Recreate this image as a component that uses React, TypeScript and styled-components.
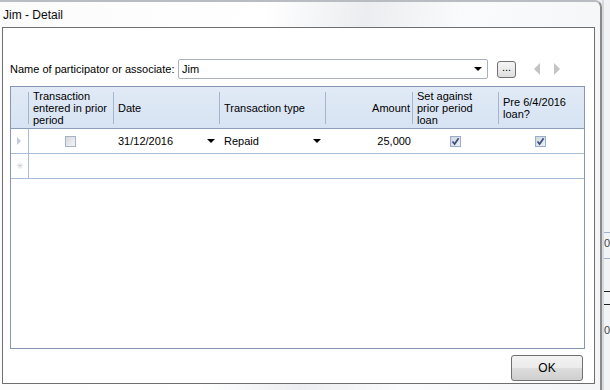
import styled, { createGlobalStyle } from "styled-components";

const GlobalStyle = createGlobalStyle`
  html, body {
    margin: 0;
    padding: 0;
    background: #eef0f3;
  }
  body {
    font-family: "Liberation Sans", Arial, sans-serif;
    font-size: 11px;
    color: #000;
  }
`;

const Desktop = styled.div`
  display: flex;
  width: 610px;
  height: 390px;
  overflow: hidden;
`;

const Window = styled.div`
  width: 602px;
  height: 390px;
  flex: none;
  box-sizing: border-box;
  display: flex;
  flex-direction: column;
  padding: 0 5px 6px 2px;
  background: linear-gradient(100deg, #fbfbfc 0%, #ffffff 40%, #ebedf0 55%, #fafbfc 70%, #f4f5f7 100%);
  border-right: 2px solid #8a8a8a;
  border-top: 2px solid #b9bcc0;
  border-top-right-radius: 7px;
`;

const TitleBar = styled.div`
  height: 25px;
  flex: none;
  display: flex;
  align-items: center;
  padding-left: 1px;
  font-size: 12px;
  color: #0b0b0b;
`;

const Client = styled.div`
  flex: 1;
  display: flex;
  flex-direction: column;
  background: #fff;
  border: 1px solid #6f6f6f;
  padding: 31px 10px 2px 7px;
`;

const NameRow = styled.div`
  display: flex;
  align-items: center;
  height: 20px;
`;

const Label = styled.span`
  width: 168px;
  white-space: nowrap;
`;

const Combo = styled.div`
  width: 310px;
  height: 20px;
  box-sizing: border-box;
  border: 1px solid #a9b3c0;
  border-radius: 2px;
  display: flex;
  align-items: center;
  justify-content: space-between;
  padding: 0 5px 0 3px;
`;

const Arrow = styled.span`
  width: 0;
  height: 0;
  border-left: 4px solid transparent;
  border-right: 4px solid transparent;
  border-top: 4px solid #000;
`;

const EllipsisButton = styled.button`
  margin-left: 9px;
  width: 19px;
  height: 17px;
  padding: 0 0 4px;
  border: 1px solid #707070;
  border-radius: 3px;
  background: linear-gradient(#f6f6f6, #dedede);
  font: 11px "Liberation Sans", Arial, sans-serif;
  line-height: 8px;
`;

const Nav = styled.div`
  display: flex;
  gap: 14px;
  margin-left: 18px;
`;

const NavArrow = styled.span<{ $dir: "left" | "right" }>`
  width: 0;
  height: 0;
  border-top: 6px solid transparent;
  border-bottom: 6px solid transparent;
  ${(p) =>
    p.$dir === "left"
      ? "border-right: 6px solid #c4c4c4;"
      : "border-left: 6px solid #c4c4c4;"}
`;

const Grid = styled.div`
  margin-top: 7px;
  width: 575px;
  height: 263px;
  box-sizing: border-box;
  border: 1px solid #8797b2;
  background: #fff;
  display: flex;
  flex-direction: column;
`;

const Row = styled.div<{ $head?: boolean }>`
  display: grid;
  grid-template-columns: 18px 85px 106px 106px 87px 86px 85px;
  height: ${(p) => (p.$head ? "41px" : "24px")};
  border-bottom: 1px solid ${(p) => (p.$head ? "#8b9dba" : "#a9bcd8")};
  background: ${(p) =>
    p.$head ? "linear-gradient(#e1eaf6, #d7e3f3)" : "#fff"};
`;

const HeadCell = styled.div<{ $right?: boolean; $last?: boolean }>`
  display: flex;
  align-items: center;
  justify-content: ${(p) => (p.$right ? "flex-end" : "flex-start")};
  text-align: ${(p) => (p.$right ? "right" : "left")};
  padding: 0 3px 0 4px;
  line-height: 12px;
  position: relative;
  &::after {
    content: "";
    display: ${(p) => (p.$last ? "none" : "block")};
    position: absolute;
    right: 0;
    top: 5px;
    bottom: 4px;
    width: 1px;
    background: #a3b5cf;
  }
`;

const RowHeader = styled.div`
  border-right: 1px solid #a9bcd8;
  display: flex;
  align-items: center;
  justify-content: center;
  color: #c3ccd8;
  font-size: 9px;
`;

const Pointer = styled.span`
  width: 0;
  height: 0;
  border-top: 4px solid transparent;
  border-bottom: 4px solid transparent;
  border-left: 4px solid #c2ccd9;
  margin-left: -2px;
`;

const Cell = styled.div<{ $align?: "left" | "center" | "right" }>`
  display: flex;
  align-items: center;
  justify-content: ${(p) =>
    p.$align === "center" ? "center" : p.$align === "right" ? "flex-end" : "space-between"};
  padding: ${(p) => (p.$align === "right" ? "0 2px 0 0" : "0 5px 0 4px")};
  color: #000;
`;

const Check = styled.span<{ $checked?: boolean }>`
  width: 11px;
  height: 11px;
  box-sizing: border-box;
  border: 1px solid ${(p) => (p.$checked ? "#9aaccc" : "#a8b3c2")};
  background: ${(p) =>
    p.$checked
      ? "linear-gradient(135deg, #cfd6e0, #eef1f5)"
      : "linear-gradient(135deg, #d6d9de, #f3f4f6)"};
  display: flex;
  align-items: center;
  justify-content: center;
  margin-right: 1px;
`;

const Footer = styled.div`
  display: flex;
  justify-content: flex-end;
  padding: 6px 1px 0 0;
`;

const OkButton = styled.button`
  width: 72px;
  height: 26px;
  border: 1px solid #707070;
  border-radius: 3px;
  background: linear-gradient(#f3f3f3 0%, #ebebeb 50%, #dddddd 51%, #cfcfcf 100%);
  font: 12px "Liberation Sans", Arial, sans-serif;
  color: #000;
`;

const Backdrop = styled.div`
  flex: 1;
  display: flex;
  flex-direction: column;
  background: #f2f3f5;
  border-left: 2px solid #d7dade;
`;

const BackLine = styled.div<{ $gap: number; $dark?: boolean }>`
  margin-top: ${(p) => p.$gap}px;
  height: 1px;
  background: ${(p) => (p.$dark ? "#222" : "#9fb0c8")};
`;

const BackText = styled.div<{ $gap: number }>`
  margin-top: ${(p) => p.$gap}px;
  font-size: 11px;
  color: #444;
  line-height: 11px;
`;

function Tick() {
  return (
    <svg width="9" height="9" viewBox="0 0 9 9">
      <path d="M1.5 4.5 L3.6 7 L7.6 1.2" fill="none" stroke="#3b4f7c" strokeWidth="1.7" />
    </svg>
  );
}

export default function App() {
  return (
    <Desktop>
      <GlobalStyle />
      <Window>
        <TitleBar>Jim - Detail</TitleBar>
        <Client>
          <NameRow>
            <Label>Name of participator or associate:</Label>
            <Combo>
              <span>Jim</span>
              <Arrow />
            </Combo>
            <EllipsisButton>...</EllipsisButton>
            <Nav>
              <NavArrow $dir="left" />
              <NavArrow $dir="right" />
            </Nav>
          </NameRow>
          <Grid>
            <Row $head>
              <HeadCell />
              <HeadCell>Transaction entered in prior period</HeadCell>
              <HeadCell>Date</HeadCell>
              <HeadCell>Transaction type</HeadCell>
              <HeadCell $right>Amount</HeadCell>
              <HeadCell>Set against prior period loan</HeadCell>
              <HeadCell $last>Pre 6/4/2016 loan?</HeadCell>
            </Row>
            <Row>
              <RowHeader>
                <Pointer />
              </RowHeader>
              <Cell $align="center">
                <Check />
              </Cell>
              <Cell>
                <span>31/12/2016</span>
                <Arrow />
              </Cell>
              <Cell>
                <span>Repaid</span>
                <Arrow />
              </Cell>
              <Cell $align="right">25,000</Cell>
              <Cell $align="center">
                <Check $checked>
                  <Tick />
                </Check>
              </Cell>
              <Cell $align="center">
                <Check $checked>
                  <Tick />
                </Check>
              </Cell>
            </Row>
            <Row>
              <RowHeader>✳</RowHeader>
              <Cell />
              <Cell />
              <Cell />
              <Cell />
              <Cell />
              <Cell />
            </Row>
          </Grid>
          <Footer>
            <OkButton>OK</OkButton>
          </Footer>
        </Client>
      </Window>
      <Backdrop>
        <BackLine $gap={232} />
        <BackText $gap={5}>0</BackText>
        <BackLine $gap={9} />
        <BackLine $gap={32} $dark />
        <BackLine $gap={12} $dark />
        <BackText $gap={20}>0</BackText>
      </Backdrop>
    </Desktop>
  );
}
